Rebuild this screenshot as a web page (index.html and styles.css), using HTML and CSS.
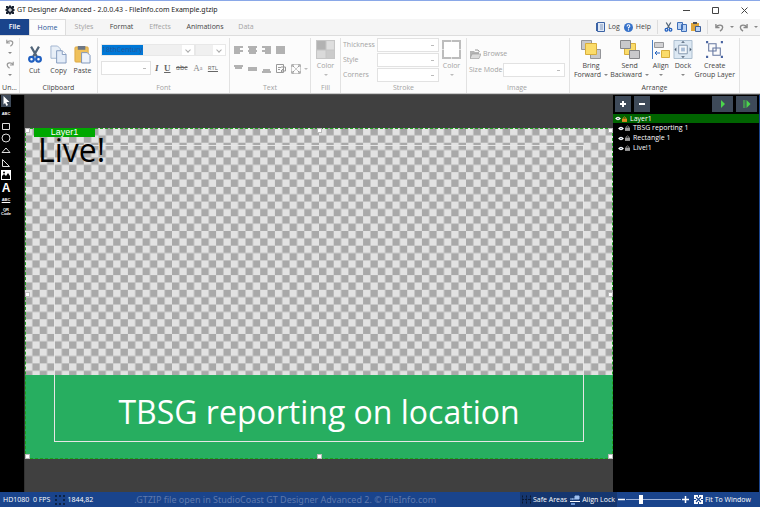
FILE: index.html
```html
<!DOCTYPE html>
<html lang="en">
<head>
<meta charset="utf-8">
<title>GT Designer Advanced</title>
<link rel="stylesheet" href="styles.css">
</head>
<body>
<svg class="defs" aria-hidden="true">
  <symbol id="undo" viewBox="0 0 10 10"><path d="M1 1v4h4M1.500 4.500C3 1.500 8.500 1.500 8.500 5c0 2-1.500 3-3 4" fill="none" stroke="currentColor" stroke-width="1.500"/></symbol>
  <symbol id="cut" viewBox="0 0 16 20"><path d="M3.500 1l7 12M12.500 1l-7 12" stroke="#526579" stroke-width="2.500" fill="none"/><circle cx="4" cy="15.500" r="2.700" fill="none" stroke="#1f5fc0" stroke-width="2.500"/><circle cx="12" cy="15.500" r="2.700" fill="none" stroke="#1f5fc0" stroke-width="2.500"/></symbol>
  <symbol id="copy" viewBox="0 0 18 20"><path d="M1 1h7l3 3v10H1z" fill="#e8eff7" stroke="#9fb4cf"/><path d="M7 6h6l4 4v9H7z" fill="#e3ecf8" stroke="#8299bd"/><path d="M13 6v4h4" fill="#fff" stroke="#8299bd"/></symbol>
  <symbol id="paste" viewBox="0 0 18 20"><rect x="1" y="2" width="14" height="16" rx="1" fill="#efc15c" stroke="#dda842"/><path d="M4 1h8v4H4z" fill="#6d7786"/><path d="M8 8h6l3 3v8H8z" fill="#eef3fb" stroke="#7c93b8"/></symbol>
  <symbol id="dim-swatch" viewBox="0 0 18 18"><path d="M0 0h18v18H0z" fill="#c6c6c6"/><path d="M1 1h8v8H1z" fill="#b2b2b2"/><path d="M10 1h7v8h-7z" fill="#dedede"/><path d="M1 10h8v7H1z" fill="#dadada"/><path d="M10 10h7v7h-7z" fill="#cbcbcb"/></symbol>
  <symbol id="forward" viewBox="0 0 20 19"><path d="M.5.500h10v9H.5zM9.500 9.500h10v9h-10z" fill="#c9c9cb" stroke="#949599"/><path d="M4.500 3.500h11v11h-11z" fill="#fbdc6a" stroke="#d8ae3c"/></symbol>
  <symbol id="backward" viewBox="0 0 20 19"><path d="M4.500 3.500h11v11h-11z" fill="#fbdc6a" stroke="#d8ae3c"/><path d="M.5.500h10v8H.5zM9.500 10.500h10v8h-10z" fill="#c9c9cb" stroke="#858689"/></symbol>
  <symbol id="align" viewBox="0 0 18 19"><path d="M.5 0v19" stroke="#4a7fc4"/><path d="M2.500 2.500h9v5h-9z" fill="#d2d2d4" stroke="#97989b"/><path d="M9.500 10.500h8v7h-8z" fill="#fbdc6a" stroke="#d8ae3c"/><path d="M8 13H3m2-2l-2 2 2 2" fill="none" stroke="#2563bd"/></symbol>
  <symbol id="dock" viewBox="0 0 20 20"><path d="M.5.500h19v19H.5z" fill="#dce8f3" stroke="#a9bccd"/><path d="M5.500 5.500h9v9h-9z" fill="#f5f8fb" stroke="#8296ac"/><path d="M8 8h4v4H8z" fill="#a9bdd6"/><path d="M8 3l2-2 2 2zM8 17l2 2 2-2zM3 8l-2 2 2 2zM17 8l2 2-2 2z" fill="#4a5b70"/></symbol>
  <symbol id="group" viewBox="0 0 18 18"><path d="M3.500 3.500h7v7h-7zM7.500 7.500h7v7h-7z" fill="none" stroke="#6577a0"/><path d="M1 1h2v2H1zM15 1h2v2h-2zM1 15h2v2H1zM15 15h2v2h-2z" fill="#4762a0"/></symbol>
  <symbol id="eye" viewBox="0 0 7 6"><path d="M0 3Q3.500-1 7 3Q3.500 7 0 3z" fill="#fff"/><circle cx="3.500" cy="3" r="1" fill="#456"/></symbol>
  <symbol id="lock" viewBox="0 0 6 7"><path d="M1.500 3V2q1.500-2 3 0v1" fill="none" stroke="currentColor"/><path d="M0 3h6v4H0z" fill="currentColor"/></symbol>
</svg>

<div class="app">
<header class="titlebar">
  <svg class="logo" viewBox="0 0 10 10"><path d="M5 0l5 5-5 5-5-5z" fill="#1a2230"/><path d="M1 1h2v2H1zM7 1h2v2H7zM1 7h2v2H1zM7 7h2v2H7z" fill="#1a2230"/><path d="M3 5h4M5 3v4" stroke="#fff"/></svg>
  <h1>GT Designer Advanced - 2.0.0.43 - FileInfo.com Example.gtzip</h1>
  <div class="window-buttons">
    <button aria-label="Minimize"><svg viewBox="0 0 7 7"><path d="M0 3.500h7"/></svg></button>
    <button aria-label="Maximize"><svg viewBox="0 0 7 7"><path d="M.5.500h6v6h-6z"/></svg></button>
    <button aria-label="Close"><svg viewBox="0 0 7 7"><path d="M.5.500l6 6m0-6l-6 6"/></svg></button>
  </div>
</header>

<nav class="tabs">
  <button class="tab file">File</button>
  <button class="tab home">Home</button>
  <button class="tab dim styles">Styles</button>
  <button class="tab format">Format</button>
  <button class="tab dim effects">Effects</button>
  <button class="tab animations">Animations</button>
  <button class="tab dim data">Data</button>
  <div class="quick">
    <button><svg width="9" height="10" viewBox="0 0 9 10"><path d="M1.500.5h7v9h-7z" fill="#dfe8f5" stroke="#3b63a5"/><path d="M0 1h2v8H0z" fill="#3b63a5"/><path d="M4 3h3M4 5h3M4 7h3" stroke="#8298bd"/></svg>Log</button>
    <button><svg width="9" height="9" viewBox="0 0 10 10"><circle cx="5" cy="5" r="5" fill="#3672ca"/><path d="M3.500 4q0-2 1.500-2t1.500 1.500Q6.500 4.500 5 5v1M5 7v1.200" fill="none" stroke="#fff" stroke-width="1.200"/></svg>Help</button>
    <i class="rule"></i>
    <button aria-label="Cut"><svg width="9" height="10"><use href="#cut"/></svg></button>
    <button aria-label="Copy"><svg width="10" height="10" viewBox="0 0 10 10"><path d="M.5.500h5v7h-5zM4.500 2.500h5v7h-5z" fill="#b9d2f4" stroke="#3f6fb8"/></svg></button>
    <button aria-label="Paste"><svg width="10" height="10" viewBox="0 0 10 10"><path d="M0 1h8v8H0z" fill="#dda53a"/><path d="M2 0h4v2H2z" fill="#4a4f5c"/><path d="M4.500 4.500h5v5h-5z" fill="#b9d2f4" stroke="#3f5f98"/></svg></button>
    <i class="rule"></i>
    <button class="grey" aria-label="Undo"><svg width="9" height="9"><use href="#undo"/></svg><b class="caret"></b></button>
    <button class="grey" aria-label="Redo"><svg class="flip" width="9" height="9"><use href="#undo"/></svg><b class="caret"></b></button>
  </div>
</nav>

<section class="ribbon">
  <div class="group undo-group">
    <div class="body stack">
      <button aria-label="Undo"><svg width="8" height="8"><use href="#undo"/></svg><b class="caret"></b></button>
      <button aria-label="Redo"><svg class="flip" width="8" height="8"><use href="#undo"/></svg><b class="caret"></b></button>
    </div>
    <h2>Un...</h2>
  </div>
  <div class="group clipboard">
    <div class="body">
      <button class="big"><svg width="14" height="19"><use href="#cut"/></svg>Cut</button>
      <button class="big"><svg width="17" height="19"><use href="#copy"/></svg>Copy</button>
      <button class="big"><svg width="17" height="19"><use href="#paste"/></svg>Paste</button>
    </div>
    <h2>Clipboard</h2>
  </div>
  <div class="group dim font">
    <div class="body rows">
      <div class="row joined">
        <button class="combo family" aria-label="Font family"><span>18thCentury</span><b class="drop"></b></button>
        <button class="combo size" aria-label="Font size"><b class="drop"></b></button>
      </div>
      <div class="row">
        <select class="weight" aria-label="Weight"><option></option></select>
        <div class="marks">
          <button><em>I</em></button><button><u>U</u></button><button><s>abc</s></button><button class="aa">A<sup>a</sup></button><button class="rtl"><u>RTL</u></button>
        </div>
      </div>
    </div>
    <h2>Font</h2>
  </div>
  <div class="group dim text">
    <div class="body rows">
      <div class="row icons">
        <button aria-label="Left"><svg viewBox="0 0 9 8"><path d="M0 1h9M0 3h6M0 5h9M0 7h6"/></svg></button>
        <button aria-label="Center"><svg viewBox="0 0 9 8"><path d="M0 1h9M1 3h7M0 5h9M1 7h7"/></svg></button>
        <button aria-label="Right"><svg viewBox="0 0 9 8"><path d="M0 1h9M3 3h6M0 5h9M3 7h6"/></svg></button>
        <button aria-label="Justify"><svg viewBox="0 0 9 8"><path d="M0 1h9M0 3h9M0 5h9M0 7h9"/></svg></button>
      </div>
      <div class="row icons">
        <button aria-label="Top"><svg viewBox="0 0 9 8"><path d="M0 1h9M1 3h7"/></svg></button>
        <button aria-label="Middle"><svg viewBox="0 0 9 8"><path d="M0 3h9M0 5h9"/></svg></button>
        <button aria-label="Bottom"><svg viewBox="0 0 9 8"><path d="M1 5h7M0 7h9"/></svg></button>
        <button class="thin" aria-label="Wrap"><svg viewBox="0 0 10 10"><path d="M.5.500h7v8h-7zM2 3.500h3M2 5.500h2M5 3h4.500v4H5M7 5L5 7l2 2"/></svg></button>
        <button class="fit thin" aria-label="Autofit"><svg viewBox="0 0 10 10"><path d="M.5.500h9v9h-9z" opacity=".5"/><path d="M1 1h2M1 1v2M9 1H7M9 1v2M1 9h2M1 9V7M9 9H7M9 9V7M2 2l1.500 1.500M8 2L6.500 3.500M2 8l1.500-1.500M8 8L6.500 6.500M4 5h2"/></svg><b class="caret"></b></button>
      </div>
    </div>
    <h2>Text</h2>
  </div>
  <div class="group dim fill">
    <div class="body"><button class="big"><svg width="19" height="19"><use href="#dim-swatch"/></svg>Color<b class="caret"></b></button></div>
    <h2>Fill</h2>
  </div>
  <div class="group dim stroke">
    <div class="body">
      <div class="fields">
        <label for="thick">Thickness</label><select id="thick"><option></option></select>
        <label for="style">Style</label><select id="style"><option></option></select>
        <label for="corner">Corners</label><select id="corner"><option></option></select>
      </div>
      <button class="big"><svg width="19" height="19" viewBox="0 0 19 19"><path d="M1 1h17v17H1z" fill="#fff" stroke="#bdbdbd" stroke-width="2"/><path d="M9 1h1M9 18h1M1 9v1M18 9v1" stroke="#e4e4e4" stroke-width="2"/></svg>Color<b class="caret"></b></button>
    </div>
    <h2>Stroke</h2>
  </div>
  <div class="group dim image">
    <div class="body rows">
      <button class="browse"><svg width="11" height="10" viewBox="0 0 11 10"><path d="M0 2h4l1 1h4v6H0z" fill="#b5b5b5"/><path d="M2 5h9L9 9.500H0z" fill="#dcdcdc" stroke="#959595" stroke-width=".6"/><path d="M5 1h3l1.500 2" fill="none" stroke="#999"/></svg>Browse</button>
      <div class="row mode"><label for="mode">Size Mode</label><select id="mode"><option></option></select></div>
    </div>
    <h2>Image</h2>
  </div>
  <div class="group arrange">
    <div class="body">
      <button class="big wide"><svg width="20" height="19"><use href="#forward"/></svg><span>Bring<br>Forward<b class="caret"></b></span></button>
      <button class="big wide"><svg width="20" height="19"><use href="#backward"/></svg><span>Send<br>Backward<b class="caret"></b></span></button>
      <button class="big slim"><svg width="18" height="19"><use href="#align"/></svg>Align<b class="caret"></b></button>
      <button class="big slim"><svg width="20" height="19"><use href="#dock"/></svg>Dock<b class="caret"></b></button>
      <button class="big wide"><svg width="19" height="19"><use href="#group"/></svg><span>Create<br>Group Layer</span></button>
    </div>
    <h2>Arrange</h2>
  </div>
</section>

<main class="workspace">
  <aside class="tools">
    <button class="on" aria-label="Select"><svg viewBox="0 0 10 10"><path d="M2.500 0l6 6H5.500l1.500 3-1.500 1L4 7 2.500 8.500z" fill="#fff" stroke="none"/></svg></button>
    <button class="word tall">ABC</button>
    <button aria-label="Rectangle"><svg viewBox="0 0 10 10"><path d="M1.500 2.500h7v6h-7z"/></svg></button>
    <button aria-label="Ellipse"><svg viewBox="0 0 10 10"><circle cx="5" cy="5" r="4"/></svg></button>
    <button aria-label="Triangle"><svg viewBox="0 0 10 10"><path d="M5 3l4 4.500H1z"/></svg></button>
    <button class="tall" aria-label="Right triangle"><svg viewBox="0 0 10 10"><path d="M1.500 1.500l7 7h-7z"/></svg></button>
    <button aria-label="Image"><svg viewBox="0 0 10 10"><path d="M0 0h10v10H0z" fill="#fff" stroke="none"/><path d="M1 9V6l2-2 2 2 2-3 2 3v3z" fill="#000" stroke="none"/><circle cx="3" cy="2.500" r="1" fill="#000" stroke="none"/></svg></button>
    <button class="letter tall">A</button>
    <button class="word line">ABC</button>
    <button class="word qr">QR<br>Code</button>
  </aside>

  <div class="viewport">
    <div class="stage">
      <svg class="board" viewBox="0 0 1920 1080" preserveAspectRatio="none">
        <pattern id="checker" width="48" height="48" patternUnits="userSpaceOnUse"><path d="M0 0h48v48H0z" fill="#e2e2e2"/><path d="M24 0h24v24H24zM0 24h24v24H0z" fill="#a9a9a9"/></pattern>
        <path d="M0 0h1920v1080H0z" fill="url(#checker)"/>
        <path d="M0 806h1920v274H0z" fill="#27ae60"/>
      </svg>
      <div class="safe"></div>
      <div class="live">Live!</div>
      <div class="headline">TBSG reporting on location</div>
      <div class="edge"></div>
      <div class="tag">Layer1</div>
      <i class="handle nw"></i><i class="handle n"></i><i class="handle ne"></i><i class="handle w"></i><i class="handle e"></i><i class="handle sw"></i><i class="handle s"></i><i class="handle se"></i>
    </div>
  </div>

  <aside class="layers">
    <div class="layer-bar">
      <button aria-label="Add"><svg viewBox="0 0 8 8"><path d="M1 4h6M4 1v6" stroke="#fff" stroke-width="2"/></svg></button>
      <button aria-label="Remove"><svg viewBox="0 0 8 8"><path d="M1 4h6" stroke="#fff" stroke-width="2"/></svg></button>
      <span class="grow"></span>
      <button class="play" aria-label="Play"><svg viewBox="0 0 8 8"><path d="M2 0l4 4-4 4z" fill="#4bd64b"/></svg></button>
      <button class="play" aria-label="Play all"><svg viewBox="0 0 8 8"><path d="M3.500 0l4 4-4 4z" fill="#4bd64b"/><path d="M0 1h2.500M0 3h2.500M0 5h2.500M0 7h2.500" stroke="#4bd64b"/></svg></button>
    </div>
    <ul>
      <li class="top"><svg class="eye"><use href="#eye"/></svg><svg class="lock"><use href="#lock"/></svg>Layer1</li>
      <li><svg class="eye"><use href="#eye"/></svg><svg class="lock"><use href="#lock"/></svg>TBSG reporting 1</li>
      <li><svg class="eye"><use href="#eye"/></svg><svg class="lock"><use href="#lock"/></svg>Rectangle 1</li>
      <li><svg class="eye"><use href="#eye"/></svg><svg class="lock"><use href="#lock"/></svg>Live!1</li>
    </ul>
  </aside>
</main>

<footer class="status">
  <span class="fps">HD1080&nbsp; 0 FPS</span>
  <svg class="pos" viewBox="0 0 10 10"><path d="M0 0h2v2H0zM4 0h2v2H4zM8 0h2v2H8zM0 4h2v2H0zM8 4h2v2H8zM0 8h2v2H0zM4 8h2v2H4zM8 8h2v2H8z" fill="#0d2345"/></svg>
  <span>1844,82</span>
  <span class="caption">.GTZIP file open in StudioCoast GT Designer Advanced 2. © FileInfo.com</span>
  <div class="toggles">
    <button><svg width="9" height="9" viewBox="0 0 9 9"><path d="M.5.500v8M8.500.5v8M4.500.500v8M0 4.500h9" stroke="#0a1730" stroke-dasharray="2 1"/></svg>Safe Areas</button>
    <button><svg width="10" height="10" viewBox="0 0 10 10"><path d="M2 4h7V1H5v3M0 4h3" fill="#9fc0ee" stroke="#9fc0ee"/><path d="M0 6.500h10" stroke="#fff"/><path d="M1 8h4v2H1z" fill="#6d97d6"/></svg>Align Lock</button>
  </div>
  <button class="zoom" aria-label="Zoom out"><svg viewBox="0 0 7 7"><path d="M0 3.500h7"/></svg></button>
  <input type="range" min="0" max="100" value="25" aria-label="Zoom">
  <button class="zoom" aria-label="Zoom in"><svg viewBox="0 0 7 7"><path d="M0 3.500h7M3.500 0v7"/></svg></button>
  <button class="window-fit"><svg width="9" height="9" viewBox="0 0 9 9"><path d="M0 0h9v9H0z" fill="#fff"/><path d="M2 2l5 5M7 2L2 7" stroke="#1a448c" stroke-width="1.200"/><path d="M4.500 0v2M4.500 7v2M0 4.500h2M7 4.500h2" stroke="#1a448c"/></svg>Fit To Window</button>
</footer>
</div>
</body>
</html>
```
FILE: styles.css
```css
* { box-sizing: border-box; }
body { margin: 0; font: 7px/10px "Open Sans", "Noto Sans", sans-serif; color: #444; background: #fff; }
button, select, input { font: inherit; color: inherit; margin: 0; padding: 0; border: 0; background: none; }
button { display: flex; align-items: center; justify-content: center; }
h1, h2, ul { margin: 0; padding: 0; font-weight: 400; }
.defs { position: absolute; width: 0; height: 0; }
.app { display: flex; flex-direction: column; height: 100vh; border-top: 1px solid #8aa8e8; }

.titlebar { display: flex; align-items: center; flex: 0 0 18px; padding: 0 1px 0 5px; }
.logo { width: 10px; height: 10px; margin-right: 2px; }
h1 { font-family: "Noto Sans", sans-serif; font-size: 7px; color: #222; white-space: nowrap; }
.window-buttons { display: flex; margin-left: auto; }
.window-buttons button { width: 29px; height: 18px; }
.window-buttons svg { width: 7px; height: 7px; fill: none; stroke: #444; }

.tabs { display: flex; flex: 0 0 16px; background: #f5f5f5; border-bottom: 1px solid #ddd; font-size: 7px; }
.tab { height: 16px; }
.tab.file { width: 29px; background: #1a448c; color: #fff; font-weight: 600; }
.tab.home { width: 37px; background: #fcfcfc; color: #2b579a; border: solid #ddd; border-width: 1px 1px 0; }
.tab.styles { width: 36px; }
.tab.format { width: 39px; }
.tab.effects { width: 38px; }
.tab.animations { width: 52px; }
.tab.data { width: 30px; }
.dim { color: #a3a3a3; }
.quick { display: flex; align-items: center; gap: 4px; margin-left: auto; padding-right: 2px; }
.quick button { gap: 3px; }
.quick .grey { gap: 6px; margin-left: 1px; }
.rule { width: 1px; height: 14px; background: #ddd; margin: 0 2px; }
.grey { color: #888; }
.flip { transform: scaleX(-1); }
.caret { display: inline-block; border: 2px solid transparent; border-top-color: #888; border-bottom: 0; }
.dim .caret { border-top-color: #bbb; }

.ribbon { display: flex; flex: 0 0 58px; background: #fcfcfc; border-bottom: 1px solid #c8c8c8; padding-top: 2px; }
.group { display: flex; flex-direction: column; height: 55px; border-right: 1px solid #e2e2e2; }
.group h2 { font-size: 7px; line-height: 10px; text-align: center; margin-top: auto; }
.body { display: flex; justify-content: center; height: 44px; }
.big { flex-direction: column; justify-content: flex-start; line-height: 9px; padding-top: 2px; }
.big svg { margin-bottom: 2px; }
.big > .caret { margin-top: 4px; }
.big span .caret { margin-left: 3px; vertical-align: 1px; }
.rows { flex-direction: column; }
.row { display: flex; align-items: center; }
select { appearance: none; height: 14px; border: 1px solid #e2e2e2; background: linear-gradient(#bbb, #bbb) right 4px center / 3px 1px no-repeat #fff; }
.undo-group { width: 20px; }
.stack { flex-direction: column; justify-content: flex-start; color: #999; }
.stack button { flex-direction: column; justify-content: flex-start; height: 22px; gap: 5px; padding-top: 1px; }
.clipboard { width: 78px; }
.clipboard .big { width: 24px; padding-top: 7px; }
.font { width: 132px; padding: 0 3px; }
.font .rows { gap: 5px; padding-top: 6px; justify-content: flex-start; }
.combo { height: 12px; background: #f0f0f0; border: 1px solid #e8e8e8; justify-content: space-between; }
.combo span { background: #0078d7; color: #27599a; line-height: 10px; }
.drop { width: 12px; height: 10px; background: #fff; display: flex; align-items: center; justify-content: center; margin-left: auto; }
.drop::after { content: ""; width: 3px; height: 3px; border: solid #aaa; border-width: 0 1px 1px 0; transform: rotate(45deg); }
.family { width: 95px; }
.size { width: 31px; }
.weight { width: 50px; }
.marks { display: flex; flex: 1; justify-content: space-between; padding: 0 8px 0 4px; color: #666; }
.marks em, .marks u { font-family: "Liberation Serif", serif; font-weight: 700; font-size: 9px; }
.marks .aa { color: #888; font-family: "Liberation Serif", serif; font-size: 9px; }
.marks sup { font-size: 6px; line-height: 1; }
.marks .rtl u { font: 6px/10px "Open Sans", sans-serif; }
.text { width: 81px; padding: 0 4px; }
.text .rows { gap: 9px; padding-top: 7px; justify-content: flex-start; }
.icons { gap: 5px; height: 10px; }
.icons svg { width: 9px; height: 8px; fill: none; stroke: #999; stroke-width: 1.3; }
.icons .thin svg { width: 10px; height: 10px; stroke-width: 1; }
.icons .fit { gap: 3px; }
.fill { width: 30px; }
.stroke { width: 126px; }
.stroke .body { justify-content: space-between; padding: 0 5px 0 2px; }
.fields { display: grid; grid-template-columns: 34px 62px; grid-auto-rows: 14px; row-gap: 1px; align-items: center; }
.image { width: 103px; padding: 0 4px 0 2px; }
.image .rows { justify-content: flex-start; gap: 4px; padding-top: 11px; }
.browse { align-self: flex-start; gap: 2px; padding-left: 1px; }
.mode { justify-content: space-between; }
.mode select { width: 62px; }
.arrange { width: 170px; }
.arrange .body { justify-content: space-between; padding: 0 4px 0 3px; }
.wide { min-width: 36px; }
.slim { width: 21px; }

.workspace { display: flex; flex: 1; min-height: 0; background: #000; border-top: 1px solid #555; }
.tools { flex: 0 0 24px; display: flex; flex-direction: column; align-items: flex-start; padding-left: 1px; color: #fff; }
.tools button { width: 10px; height: 12px; }
.tools button.on { background: #3e4a59; }
.tools button.tall { height: 13px; }
.tools svg { width: 10px; height: 10px; fill: none; stroke: #ddd; }
.tools .word { font: 700 4px/4px "Liberation Sans", sans-serif; }
.tools .line { text-decoration: underline; }
.tools .letter { font: 700 12px/12px "Liberation Sans", sans-serif; }
.viewport { flex: 1; background: #404040; border-left: 1px solid #333; padding: 33px 0; }
.stage { position: relative; height: 100%; }
.board { display: block; width: 100%; height: 100%; }
.edge { position: absolute; inset: 0; border: 1px dashed #1ea01e; }
.safe { position: absolute; inset: 5%; border: 1px solid #e6e6e6; }
.live { position: absolute; left: 13px; top: 2px; color: #000; font-size: 32px; line-height: 40px; }
.headline { position: absolute; left: 0; right: 0; bottom: 27px; text-align: center; color: #fff; font-size: 32px; line-height: 40px; white-space: nowrap; }
.tag { position: absolute; left: 9px; top: 0; width: 61px; background: #00a800; color: #fff; font: 9px/9px "Liberation Sans", sans-serif; text-align: center; }
.handle { position: absolute; width: 5px; height: 5px; background: #fff; border: 1px solid #bbb; }
.nw, .n, .ne { top: 0; }
.w, .e { top: calc(50% - 2px); }
.sw, .s, .se { bottom: 0; }
.nw, .w, .sw { left: 0; }
.n, .s { left: calc(50% - 2px); }
.ne, .e, .se { right: 0; }

.layers { flex: 0 0 147px; color: #fff; border-right: 1px solid #1a448c; }
.layer-bar { display: flex; gap: 3px; padding: 1px 2px; height: 19px; }
.layer-bar button { width: 16px; height: 16px; background: #3e4a59; }
.layer-bar svg { width: 8px; height: 8px; }
.layer-bar .play { width: 21px; }
.grow { flex: 1; }
.layers ul { list-style: none; }
.layers li { display: flex; align-items: center; gap: 1px; height: 10px; padding-left: 5px; font-size: 7px; }
.layers .top { background: #006400; padding-left: 2px; height: 9px; }
.eye { width: 6px; height: 5px; }
.lock { width: 5px; height: 6px; color: #999; margin-right: 2px; }
.top .lock { color: #e08a1e; }

.status { display: flex; align-items: center; flex: 0 0 15px; background: #1a448c; color: #fff; padding: 0 9px 0 3px; white-space: nowrap; font-size: 7px; }
.pos { width: 10px; height: 10px; margin: 0 2px 0 5px; }
.caption { margin-left: 41px; font-family: "Noto Sans", sans-serif; font-size: 9px; color: #5f79ad; }
.toggles { display: flex; gap: 3px; margin-left: auto; height: 15px; padding: 0 2px; background: #15366f; }
.toggles button, .window-fit { gap: 2px; }
.zoom svg { width: 7px; height: 7px; stroke: #fff; stroke-width: 1.5; }
.zoom { margin: 0 1px; }
input[type="range"] { appearance: none; width: 55px; height: 12px; }
input[type="range"]::-webkit-slider-runnable-track { height: 1px; background: #9fb4dc; }
input[type="range"]::-webkit-slider-thumb { appearance: none; width: 4px; height: 9px; margin-top: -4px; background: #fff; }
.window-fit { margin-left: 4px; }
```
